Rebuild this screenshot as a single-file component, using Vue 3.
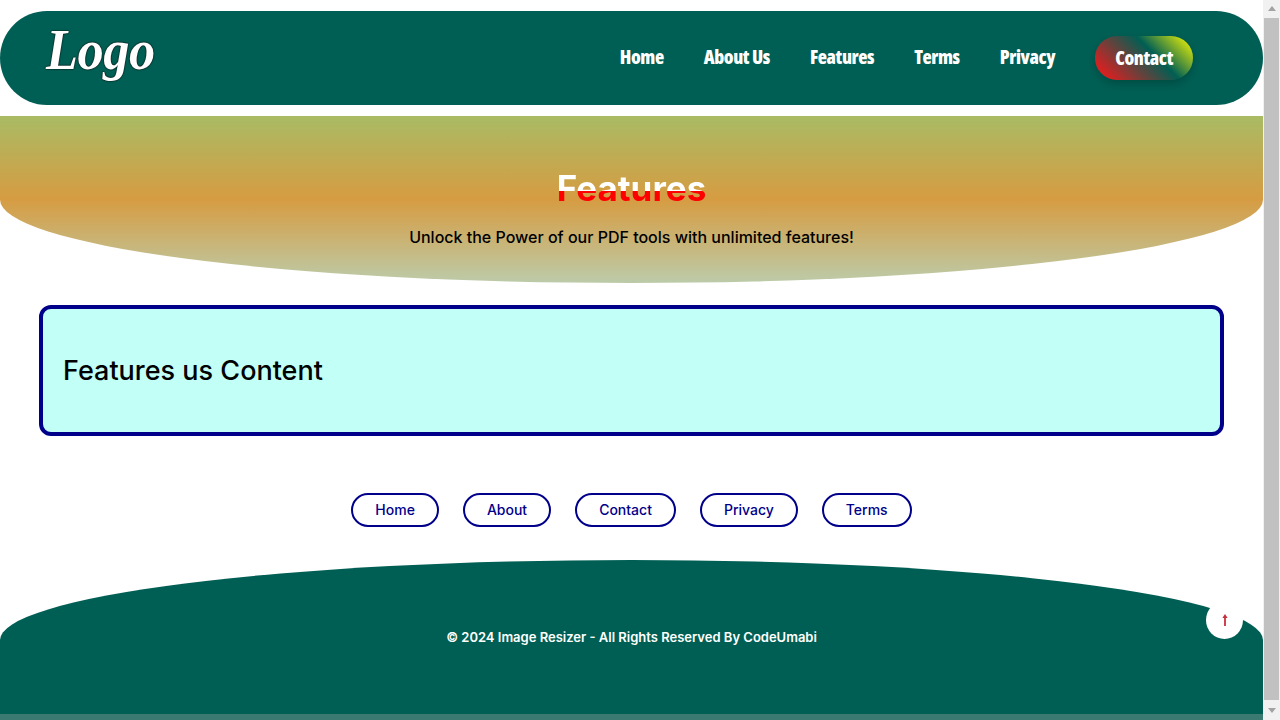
<template>
  <div class="page">
    <main class="content">
      <header class="app-header">
        <div class="logo">Logo</div>
        <nav class="nav-links">
          <a href="#home">Home</a>
          <a href="#about">About Us</a>
          <a href="#features">Features</a>
          <a href="#terms">Terms</a>
          <a href="#privacy">Privacy</a>
          <a href="#contact" class="contact-btn">Contact</a>
        </nav>
      </header>

      <section class="hero">
        <h1>Features</h1>
        <p>Unlock the Power of our PDF tools with unlimited features!</p>
      </section>

      <section class="card">
        <h2>Features us Content</h2>
      </section>

      <div class="pill-links">
        <a v-for="link in links" :key="link" href="#">{{ link }}</a>
      </div>

      <footer class="app-footer">
        <p>© 2024 Image Resizer - All Rights Reserved By CodeUmabi</p>
        <button class="to-top" type="button" aria-label="Back to top">
          <svg width="6" height="12" viewBox="0 0 6 12">
            <path d="M3 0 L5.6 4 L3.9 4 L3.9 12 L2.1 12 L2.1 4 L0.4 4 Z" fill="#c9303e" />
          </svg>
        </button>
      </footer>
      <div class="footer-strip"></div>
    </main>

    <!-- scrollbar -->
    <aside class="scrollbar">
      <span class="arrow up"></span>
      <span class="thumb"></span>
      <span class="arrow down"></span>
    </aside>
  </div>
</template>

<script setup>
const links = ["Home", "About", "Contact", "Privacy", "Terms"];
</script>

<style>
html,
body {
  margin: 0;
  overflow: hidden;
  background: #fff;
}
</style>

<style scoped>
.page {
  display: flex;
  height: 720px;
  overflow: hidden;
  font-family: Inter, "Liberation Sans", sans-serif;
  font-variation-settings: "opsz" 32;
}

.content {
  flex: 1;
  min-width: 0;
  padding-top: 11px;
}

/* Header */
.app-header {
  height: 94px;
  box-sizing: border-box;
  padding: 0 70px 0 46px;
  display: flex;
  justify-content: space-between;
  background: #005f54;
  border-radius: 50px;
}

.logo {
  margin-top: 6px;
  font-family: "Liberation Serif", serif;
  font-style: italic;
  font-weight: 700;
  font-size: 57px;
  line-height: 66px;
  color: #fff;
  letter-spacing: -0.5px;
  text-shadow: 0 0 1px #000, 0 0 2px #000;
  transform: scaleX(0.92);
  transform-origin: left center;
}

.nav-links {
  display: flex;
  align-items: center;
  gap: 40px;
  margin-top: -3px;
}

.nav-links a {
  font-family: "Open Sans", sans-serif;
  font-stretch: 75%;
  font-weight: 800;
  font-size: 19px;
  letter-spacing: -0.4px;
  color: #fff;
  text-decoration: none;
}

.nav-links .contact-btn {
  padding: 0 20px;
  height: 44px;
  line-height: 44px;
  margin-top: 2px;
  border-radius: 22px;
  background: linear-gradient(45deg, #d32222 12%, #005f54 60%, #d0e010 92%);
  box-shadow: 0 4px 8px rgba(0, 0, 0, 0.2);
}

/* Hero */
.hero {
  margin-top: 11px;
  height: 167px;
  box-sizing: border-box;
  padding-top: 53px;
  text-align: center;
  background: linear-gradient(to bottom, #a9bb64, #d69c42 50%, #bccba9);
  border-radius: 0 0 50% 50%;
}

.hero h1 {
  margin: 0;
  display: inline-block;
  font-size: 35px;
  line-height: 38px;
  font-weight: 700;
  color: transparent;
  background: linear-gradient(to bottom, #fff 58%, #f00 58%);
  -webkit-background-clip: text;
  background-clip: text;
}

.hero p {
  margin: 21px 0 0;
  font-size: 16px;
  line-height: 19px;
  font-weight: 500;
  color: #000;
}

/* Card */
.card {
  margin: 22px 39px 0;
  height: 131px;
  box-sizing: border-box;
  padding: 0 20px;
  display: flex;
  align-items: center;
  background: #c2fff7;
  border: 4px solid #00008b;
  border-radius: 12px;
}

.card h2 {
  margin: 0;
  font-size: 27px;
  font-weight: 500;
  color: #000;
}

/* Pills */
.pill-links {
  margin-top: 57px;
  display: flex;
  justify-content: center;
  gap: 24px;
}

.pill-links a {
  height: 34px;
  box-sizing: border-box;
  padding: 0 22px;
  line-height: 30px;
  border: 2px solid #00008b;
  border-radius: 20px;
  font-size: 14px;
  font-weight: 500;
  color: #00008b;
  text-decoration: none;
}

/* Footer */
.app-footer {
  position: relative;
  margin-top: 33px;
  height: 154px;
  box-sizing: border-box;
  padding-top: 69px;
  text-align: center;
  background: #005f54;
  border-radius: 50% 50% 0 0 / 80px 80px 0 0;
}

.app-footer p {
  margin: 0;
  font-size: 13px;
  line-height: 16px;
  font-weight: 600;
  color: #fff;
}

.to-top {
  position: absolute;
  top: 41px;
  right: 20px;
  width: 37px;
  height: 38px;
  padding: 0;
  border: 0;
  border-radius: 50%;
  background: #fff;
  display: flex;
  align-items: center;
  justify-content: center;
}

.footer-strip {
  height: 30px;
  background: #3b7a71;
}

/* Scrollbar */
.scrollbar {
  width: 17px;
  flex: none;
  display: flex;
  flex-direction: column;
  align-items: center;
  background: #f1f1f1;
}

.thumb {
  width: 15px;
  flex: 1;
  background: #c1c1c1;
}

.arrow {
  width: 0;
  height: 0;
  border-left: 4px solid transparent;
  border-right: 4px solid transparent;
}

.arrow.up {
  margin: 6px 0 7px;
  border-bottom: 5px solid #a3a3a3;
}

.arrow.down {
  margin: 8px 0 7px;
  border-top: 5px solid #a3a3a3;
}
</style>
